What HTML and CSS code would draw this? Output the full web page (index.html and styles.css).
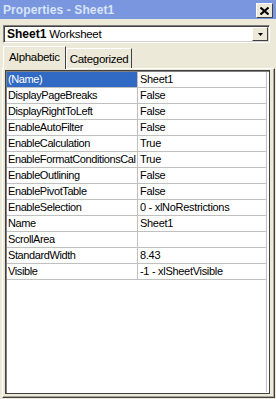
FILE: index.html
```html
<!DOCTYPE html>
<html>
<head>
<meta charset="utf-8">
<link rel="stylesheet" href="styles.css">
</head>
<body>
<div class="window">
  <div class="titlebar">
    <span class="title">Properties - Sheet1</span>
    <span class="close"><svg width="9" height="8" viewBox="0 0 9 8"><path d="M0.5 0.5 L8.5 7.5 M8.5 0.5 L0.5 7.5" stroke="#000" stroke-width="2"/></svg></span>
  </div>
  <div class="combo">
    <span class="combo-text"><b>Sheet1</b> Worksheet</span>
    <span class="combo-btn"><svg width="5" height="3" viewBox="0 0 5 3"><path d="M0 0 H5 L2.5 3 Z" fill="#000"/></svg></span>
  </div>
  <div class="tabs">
    <div class="tab active">Alphabetic</div>
    <div class="tab">Categorized</div>
  </div>
  <div class="panel">
    <div class="list">
      <div class="grid">
        <div class="row sel"><div class="name">(Name)</div><div class="val">Sheet1</div></div>
        <div class="row"><div class="name">DisplayPageBreaks</div><div class="val">False</div></div>
        <div class="row"><div class="name">DisplayRightToLeft</div><div class="val">False</div></div>
        <div class="row"><div class="name">EnableAutoFilter</div><div class="val">False</div></div>
        <div class="row"><div class="name">EnableCalculation</div><div class="val">True</div></div>
        <div class="row"><div class="name">EnableFormatConditionsCal</div><div class="val">True</div></div>
        <div class="row"><div class="name">EnableOutlining</div><div class="val">False</div></div>
        <div class="row"><div class="name">EnablePivotTable</div><div class="val">False</div></div>
        <div class="row"><div class="name">EnableSelection</div><div class="val">0 - xlNoRestrictions</div></div>
        <div class="row"><div class="name">Name</div><div class="val">Sheet1</div></div>
        <div class="row"><div class="name">ScrollArea</div><div class="val"></div></div>
        <div class="row"><div class="name">StandardWidth</div><div class="val">8.43</div></div>
        <div class="row"><div class="name">Visible</div><div class="val">-1 - xlSheetVisible</div></div>
      </div>
    </div>
  </div>
</div>
</body>
</html>
```

FILE: styles.css
```css
* { box-sizing: border-box; }
html, body { margin: 0; padding: 0; }
body {
  background: #ece9d8;
  font-family: "Liberation Sans", Arial, sans-serif;
  font-size: 11px;
  letter-spacing: -0.3px;
  color: #000;
  width: 276px;
  height: 399px;
  overflow: hidden;
}
.window {
  display: flex;
  flex-direction: column;
  height: 399px;
}
.titlebar {
  height: 19px;
  flex: none;
  background: #7a96df;
  display: flex;
  align-items: center;
  justify-content: space-between;
  padding: 0 3px 0 3px;
}
.title {
  color: #d8e4f8;
  font-weight: bold;
  font-size: 12px;
  letter-spacing: 0.1px;
}
.close {
  width: 17px;
  height: 15px;
  background: #ece9d8;
  border: 1px solid;
  border-color: #fff #404040 #404040 #fff;
  display: flex;
  align-items: center;
  justify-content: center;
  margin-top: 2px;
}
.combo {
  flex: none;
  margin: 6px 6px 0 3px;
  height: 18px;
  background: #fff;
  border: 1px solid;
  border-color: #808080 #fff #fff #808080;
  box-shadow: inset 1px 1px 0 #404040, inset -1px -1px 0 #d4d0c8;
  display: flex;
  align-items: center;
  justify-content: space-between;
  padding: 0 1px 0 3px;
}
.combo-text {
  font-size: 11.5px;
}
.combo-text b {
  font-size: 12px;
  letter-spacing: 0;
}
.combo-btn {
  width: 16px;
  height: 14px;
  background: #ece9d8;
  border: 1px solid;
  border-color: #fff #404040 #404040 #fff;
  display: flex;
  align-items: center;
  justify-content: center;
}
.tabs {
  flex: none;
  display: flex;
  align-items: flex-end;
  margin: 3px 0 0 3px;
  height: 22px;
}
.tab {
  height: 20px;
  padding: 0 3px 0 3px;
  display: flex;
  align-items: center;
  border: 1px solid;
  border-bottom: none;
  border-color: #fff #404040 transparent #fff;
  font-size: 11.5px;
}
.tab.active {
  height: 23px;
  padding: 0 5px 2px 5px;
  position: relative;
  z-index: 1;
  margin-bottom: -1px;
  background: #ece9d8;
}
.panel {
  flex: 1;
  margin: 0 1px 1px 2px;
  border: 1px solid;
  border-color: #fff #404040 #404040 #fff;
  box-shadow: inset -1px -1px 0 #aca899;
  padding: 1px 4px 3px 2px;
}
.list {
  height: 100%;
  background: #fff;
  border: 1px solid #404040;
  box-shadow: inset 1px 1px 0 #808080;
  padding: 1px 2px 1px 1px;
}
.grid {
  height: 100%;
  border-right: 1px solid #c0c0c0;
}
.row {
  display: flex;
  height: 16px;
  border-bottom: 1px solid #c0c0c0;
}
.name {
  width: 131px;
  flex: none;
  border-right: 1px solid #c0c0c0;
  padding-left: 1px;
  white-space: nowrap;
  overflow: hidden;
  line-height: 15px;
  letter-spacing: -0.4px;
}
.val {
  flex: 1;
  padding-left: 2px;
  white-space: nowrap;
  line-height: 15px;
}
.row.sel .name {
  background: #316ac5;
  color: #fff;
}
```
